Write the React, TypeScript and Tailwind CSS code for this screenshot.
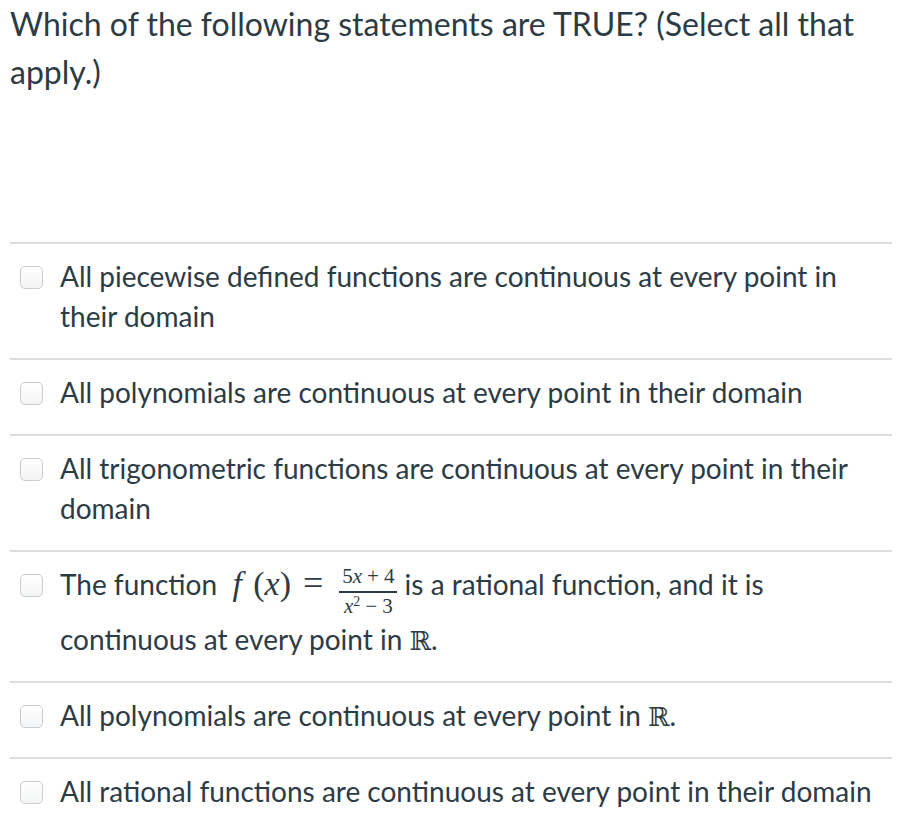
import React from 'react';

const lato = { fontFamily: 'Lato, "Noto Sans", sans-serif' };

function Checkbox() {
  return (
    <span className="mt-[10px] h-[23px] w-[23px] shrink-0 rounded-[5px] border border-[#c7cdd1] bg-gradient-to-b from-white to-[#f3f4f5]" />
  );
}

function Real() {
  return <span className="font-['DejaVu_Serif',serif] text-[26px] leading-none">ℝ</span>;
}

// f(x) = (5x+4)/(x^2-3), laid out roughly like KaTeX does
function FunctionExpr() {
  return (
    <span className="font-['Liberation_Serif',serif] text-[#2d3b45]">
      <span className="inline-block w-[26px] text-center text-[34px] italic leading-none">f</span>
      <span className="ml-[3px] inline-block text-[34px] leading-none">
        (<i>x</i>)
      </span>
      <span className="ml-[12px] mr-[16px] inline-block text-[36px] leading-none">=</span>
      <span className="inline-flex flex-col items-stretch pb-[2px] align-[12px] text-[21px]">
        <span className="px-[3px] text-center leading-[22px]">
          5<i>x</i>
          <span className="mx-[5px]">+</span>4
        </span>
        <span className="mt-[4px] h-[2px] bg-[#2d3b45]" />
        <span className="mt-[2px] px-[3px] text-center leading-[22px]">
          <i>x</i>
          <sup className="text-[14px] leading-[0]">2</sup>
          <span className="mx-[5px]">−</span>3
        </span>
      </span>
    </span>
  );
}

type Option = { id: number; content: React.ReactNode };

const options: Option[] = [
  { id: 1, content: 'All piecewise defined functions are continuous at every point in their domain' },
  { id: 2, content: 'All polynomials are continuous at every point in their domain' },
  { id: 3, content: 'All trigonometric functions are continuous at every point in their domain' },
  {
    id: 4,
    content: (
      <>
        The function <FunctionExpr /> is a rational function, and it is continuous at every point in{' '}
        <Real />.
      </>
    ),
  },
  {
    id: 5,
    content: (
      <>
        All polynomials are continuous at every point in <Real />.
      </>
    ),
  },
  { id: 6, content: 'All rational functions are continuous at every point in their domain' },
];

export default function App() {
  return (
    <div className="min-h-screen bg-white pl-[10px] pr-[24px] text-[#2d3b45]" style={lato}>
      <p className="text-[32px] leading-[48px]">
        Which of the following statements are TRUE? (Select all that apply.)
      </p>
      <div className="mt-[146px]">
        {options.map((o) => (
          <div
            key={o.id}
            className="flex items-start gap-[17px] border-t-2 border-[#dcdfe1] pb-[22px] pl-[10px] pt-[12px]"
          >
            <Checkbox />
            <div className="text-[28px] leading-[40px]">{o.content}</div>
          </div>
        ))}
      </div>
    </div>
  );
}
